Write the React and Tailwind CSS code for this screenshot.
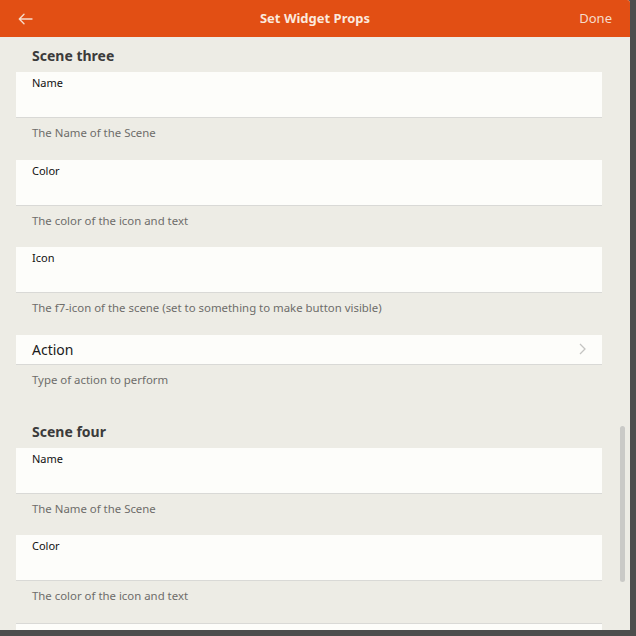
import React from "react";

const font = { fontFamily: '"Noto Sans", "Open Sans", sans-serif' };

function TextField({ label, help }) {
  return (
    <div>
      <div className="h-[46px] bg-[#fdfdfa] border-b border-[#d9d9d6] pl-4 pt-[4px]">
        <p className="text-[11px] leading-[14px] text-[#111]">{label}</p>
      </div>
      <p className="pl-4 mt-2 mb-[19.5px] text-[11.4px] leading-[14px] text-[#6d6d6a]">{help}</p>
    </div>
  );
}

function Section({ title, first, children }) {
  return (
    <section>
      <h2 className={`${first ? "pt-[9px]" : "pt-[35px]"} pb-[6px] pl-4 text-[14px] leading-5 font-bold text-[#3b3b3b]`}>{title}</h2>
      {children}
    </section>
  );
}

export default function App() {
  return (
    <div className="w-[636px] h-[636px] bg-[#4d4d4d] overflow-hidden" style={font}>
      <div className="w-[630px] h-[630px] bg-[#edece5] flex flex-col overflow-hidden rounded-tr-[3px]">
        {/* Navbar */}
        <header className="h-[37px] shrink-0 bg-[#e24f14] flex items-center justify-between px-[18px] relative">
          <svg className="w-[15px] h-[12px]" viewBox="0 0 15 12" fill="none" stroke="#f6dccb" strokeWidth="1.4" strokeLinecap="round" strokeLinejoin="round">
            <path d="M14 6H1.5M6 1.3L1.3 6 6 10.7" />
          </svg>
          <h1 className="absolute left-0 right-0 text-center text-[13px] font-bold text-[#fbe9dd] pointer-events-none">Set Widget Props</h1>
          <span className="text-[13px] text-[#f6dccb] mr-0">Done</span>
        </header>

        <div className="flex-1 flex overflow-hidden">
          <div className="flex-1 pl-4 pr-[12px]">
            <Section title="Scene three" first>
              <TextField label="Name" help="The Name of the Scene" />
              <TextField label="Color" help="The color of the icon and text" />
              <TextField label="Icon" help="The f7-icon of the scene (set to something to make button visible)" />
              <div>
                <div className="h-[30px] bg-[#fdfdfa] border-b border-[#d9d9d6] pl-4 pr-4 flex items-center justify-between">
                  <span className="text-[14px] text-[#1a1a1a]">Action</span>
                  <svg className="w-[7px] h-[12px]" viewBox="0 0 7 12" fill="none" stroke="#c4c4c2" strokeWidth="1.3">
                    <path d="M1 1l5 5-5 5" />
                  </svg>
                </div>
                <p className="pl-4 mt-2 text-[11.4px] leading-[14px] text-[#6d6d6a]">Type of action to perform</p>
              </div>
            </Section>
            <Section title="Scene four">
              <TextField label="Name" help="The Name of the Scene" />
              <TextField label="Color" help="The color of the icon and text" />
              <div className="h-[46px] bg-[#fdfdfa] border-t border-[#d9d9d6] pl-4 pt-[3px]">
                <p className="text-[11px] leading-[14px] text-[#111]">Icon</p>
              </div>
            </Section>
          </div>
          {/* scrollbar */}
          <div className="w-[16px] shrink-0 flex flex-col">
            <div className="h-[389px]" />
            <div className="ml-[6px] w-[5px] h-[156px] rounded-full bg-[#cacac7]" />
          </div>
        </div>
      </div>
    </div>
  );
}
